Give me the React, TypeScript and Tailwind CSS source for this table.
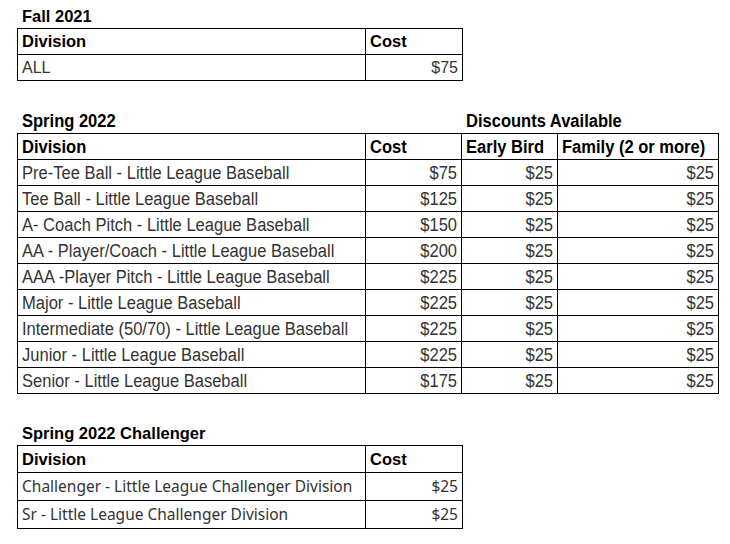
const spring = [
  ["Pre-Tee Ball - Little League Baseball", "$75"],
  ["Tee Ball - Little League Baseball", "$125"],
  ["A- Coach Pitch - Little League Baseball", "$150"],
  ["AA - Player/Coach - Little League Baseball", "$200"],
  ["AAA -Player Pitch - Little League Baseball", "$225"],
  ["Major - Little League Baseball", "$225"],
  ["Intermediate (50/70) - Little League Baseball", "$225"],
  ["Junior - Little League Baseball", "$225"],
  ["Senior - Little League Baseball", "$175"],
];

const challenger = [
  ["Challenger - Little League Challenger Division", "$25"],
  ["Sr - Little League Challenger Division", "$25"],
];

const arial = "font-['Liberation_Sans',Arial,sans-serif]";
const cell = "border border-black px-[4px] align-middle whitespace-nowrap";

// the spring block is drawn in a slightly condensed face
const L = ({ children }: { children: React.ReactNode }) => (
  <span className="inline-block origin-left scale-x-[0.918]">{children}</span>
);
const R = ({ children }: { children: React.ReactNode }) => (
  <span className="inline-block origin-right scale-x-[0.918]">{children}</span>
);

export default function App() {
  return (
    <div className="bg-white text-black min-h-[544px] pl-[17px] pt-[4px]">
      {/* Fall 2021 */}
      <div className={`${arial} h-[24px] leading-[24px] pl-[5px] text-[16.5px] font-bold`}>Fall 2021</div>
      <table className={`${arial} border-collapse text-[16px] table-fixed w-[445px]`}>
        <colgroup>
          <col className="w-[348px]" />
          <col className="w-[97px]" />
        </colgroup>
        <tbody>
          <tr className="h-[26px] font-bold text-[16.5px]">
            <td className={cell}>Division</td>
            <td className={cell}>Cost</td>
          </tr>
          <tr className="h-[26px] text-[#333]">
            <td className={cell}>ALL</td>
            <td className={`${cell} text-right`}>$75</td>
          </tr>
        </tbody>
      </table>

      {/* Spring 2022 */}
      <div className={`${arial} mt-[28px] flex h-[24px] items-center text-[18px] font-bold leading-[24px]`}>
        <div className="w-[444px] pl-[5px]"><L>Spring 2022</L></div>
        <div className="pl-[5px]"><L>Discounts Available</L></div>
      </div>
      <table className={`${arial} border-collapse text-[18px] table-fixed w-[701px]`}>
        <colgroup>
          <col className="w-[348px]" />
          <col className="w-[96px]" />
          <col className="w-[96px]" />
          <col className="w-[161px]" />
        </colgroup>
        <tbody>
          <tr className="h-[26px] font-bold leading-[24px]">
            <td className={cell}><L>Division</L></td>
            <td className={cell}><L>Cost</L></td>
            <td className={cell}><L>Early Bird</L></td>
            <td className={cell}><L>Family (2 or more)</L></td>
          </tr>
          {spring.map(([name, cost]) => (
            <tr key={name} className="h-[26px] leading-[24px] text-[#333]">
              <td className={cell}><L>{name}</L></td>
              <td className={`${cell} text-right`}><R>{cost}</R></td>
              <td className={`${cell} text-right`}><R>$25</R></td>
              <td className={`${cell} text-right`}><R>$25</R></td>
            </tr>
          ))}
        </tbody>
      </table>

      {/* Spring 2022 Challenger */}
      <div className={`${arial} mt-[27px] h-[24px] leading-[24px] pl-[5px] text-[16.5px] font-bold`}>Spring 2022 Challenger</div>
      <table className="border-collapse table-fixed w-[445px]">
        <colgroup>
          <col className="w-[348px]" />
          <col className="w-[97px]" />
        </colgroup>
        <tbody>
          <tr className={`${arial} h-[27px] text-[16.5px] font-bold`}>
            <td className={cell}>Division</td>
            <td className={cell}>Cost</td>
          </tr>
          {challenger.map(([name, cost]) => (
            <tr key={name} className="h-[28px] font-['Noto_Sans','Open_Sans',sans-serif] text-[15.5px] text-[#333]">
              <td className={cell}>{name}</td>
              <td className={`${cell} text-right`}>{cost}</td>
            </tr>
          ))}
        </tbody>
      </table>
    </div>
  );
}
